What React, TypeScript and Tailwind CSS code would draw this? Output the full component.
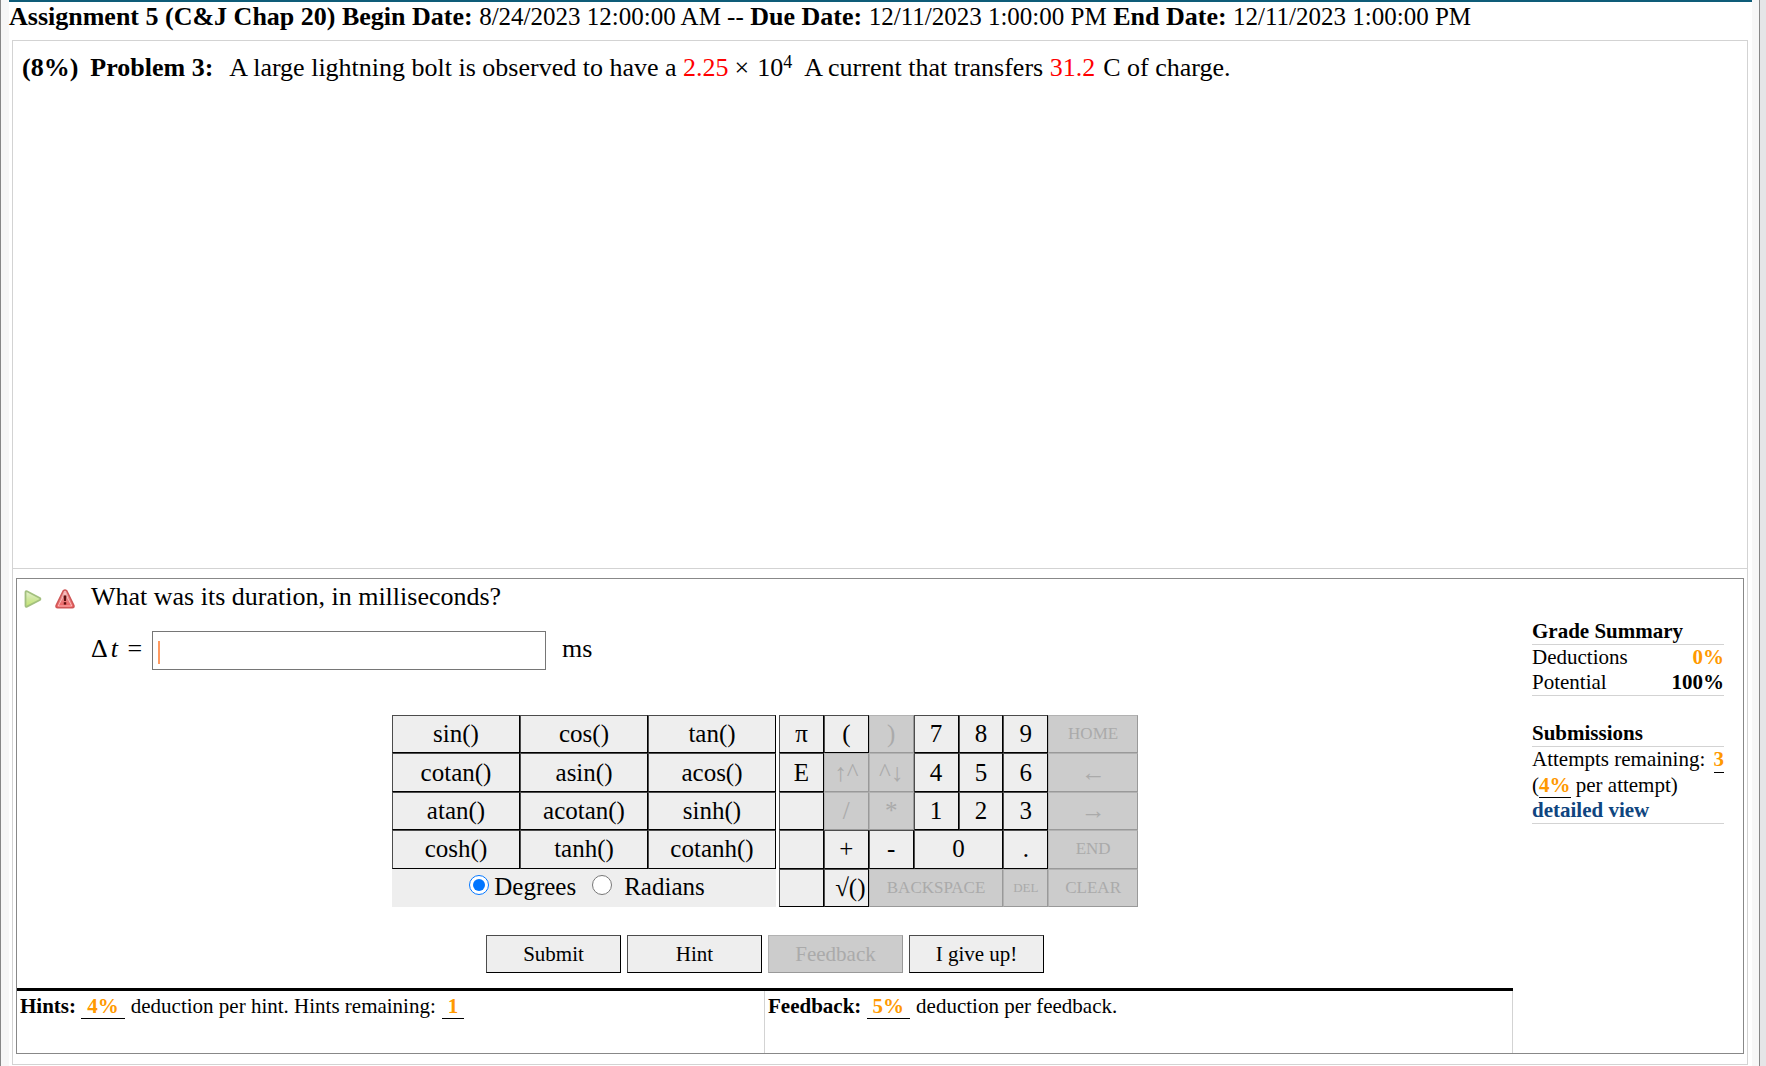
import { ReactNode, useState } from "react";
import clsx from "clsx";

type KeyData = {
  label: string;
  name?: string;
  span?: boolean;
  disabled?: boolean;
  size?: "md" | "sm";
};

const functionKeys: string[] = [
  "sin()",
  "cos()",
  "tan()",
  "cotan()",
  "asin()",
  "acos()",
  "atan()",
  "acotan()",
  "sinh()",
  "cosh()",
  "tanh()",
  "cotanh()",
];

const numberKeys: KeyData[] = [
  { label: "π" },
  { label: "(" },
  { label: ")", disabled: true },
  { label: "7" },
  { label: "8" },
  { label: "9" },
  { label: "HOME", span: true, disabled: true, size: "md" },
  { label: "E" },
  { label: "↑^", disabled: true },
  { label: "^↓", disabled: true },
  { label: "4" },
  { label: "5" },
  { label: "6" },
  { label: "←", span: true, disabled: true },
  { label: "", name: "Empty key 1" },
  { label: "/", disabled: true },
  { label: "*", disabled: true },
  { label: "1" },
  { label: "2" },
  { label: "3" },
  { label: "→", span: true, disabled: true },
  { label: "", name: "Empty key 2" },
  { label: "+" },
  { label: "-" },
  { label: "0", span: true },
  { label: "." },
  { label: "END", span: true, disabled: true, size: "md" },
  { label: "", name: "Empty key 3" },
  { label: "√()" },
  { label: "BACKSPACE", disabled: true, size: "md" },
  { label: "DEL", disabled: true, size: "sm" },
  { label: "CLEAR", span: true, disabled: true, size: "md" },
];

const buttonColors = (disabled?: boolean) =>
  disabled
    ? "border-t-[#b2b2b2] border-l-[#b2b2b2] border-r-[#999] border-b-[#999] bg-[#ccc] text-[#aaa]"
    : "border-t-[#4c4c4c] border-l-[#4c4c4c] border-r-black border-b-black bg-[#eee] text-black";

const Key = ({ label, name, span, disabled, size }: KeyData) => (
  <button
    type="button"
    disabled={disabled}
    aria-label={name}
    className={clsx(
      "flex min-w-0 items-center justify-center border leading-7",
      buttonColors(disabled),
      size === "md" ? "text-[17px]" : size === "sm" ? "text-[13px]" : "text-[25px]",
      label === "BACKSPACE" ? "col-span-3" : span && "col-span-2",
      label === "√()" && "pl-2"
    )}
  >
    {label}
  </button>
);

const ActionButton = ({
  children,
  disabled,
}: {
  children: ReactNode;
  disabled?: boolean;
}) => (
  <button
    type="button"
    disabled={disabled}
    className={clsx(
      "h-[38px] w-[135px] border text-[21px] leading-6",
      buttonColors(disabled)
    )}
  >
    {children}
  </button>
);

const Percent = ({ children, wide }: { children: ReactNode; wide?: boolean }) => (
  <b className={clsx("border-b border-black text-[#ff9900]", wide && "px-[6px]")}>
    {children}
  </b>
);

const PlayIcon = () => (
  <svg className="h-[18px] w-[18px]" viewBox="0 0 18 18">
    <defs>
      <linearGradient id="play" x1="0" y1="0" x2="0" y2="1">
        <stop offset="0" stopColor="#e6f2cf" />
        <stop offset="0.5" stopColor="#cfe79e" />
        <stop offset="1" stopColor="#c3e56f" />
      </linearGradient>
    </defs>
    <path
      d="M1.5 2.3Q1.5 .8 3 1.3L15.8 8Q17 9 15.8 10L3 16.6Q1.5 17.2 1.5 15.7Z"
      fill="url(#play)"
      stroke="#a3c07f"
      strokeWidth="1.8"
    />
  </svg>
);

const AlertIcon = () => (
  <svg className="h-5 w-5" viewBox="0 0 20 20">
    <defs>
      <linearGradient id="alert" x1="0" y1="0" x2="0" y2="1">
        <stop offset="0" stopColor="#f5c4c4" />
        <stop offset="0.5" stopColor="#e88585" />
        <stop offset="1" stopColor="#f25a5a" />
      </linearGradient>
    </defs>
    <path
      d="M8.3 1.8Q10 .1 11.7 1.8L18.8 16.2Q19.6 18.8 17.3 18.8H2.7Q.4 18.8 1.2 16.2Z"
      fill="url(#alert)"
      stroke="#cf5757"
      strokeWidth="1.5"
    />
    <path d="M10 3.8L16.8 17H3.2Z" fill="none" stroke="#f9caca" strokeWidth="0.8" />
    <path d="M8.6 6.5H11.4L11 12H9Z" fill="#5c1010" />
    <rect x="8.8" y="13.2" width="2.4" height="2.4" fill="#5c1010" />
  </svg>
);

const GradeSummary = () => (
  <aside className="w-[230px] shrink-0 px-[19px] pt-10 text-[21px] leading-[25px]">
    <h2 className="border-b border-[#d3d3d3] font-bold">Grade Summary</h2>
    <table className="w-full">
      <tbody>
        <tr>
          <th className="p-0 text-left font-normal">Deductions</th>
          <td className="p-0 text-right font-bold text-[#ff9900]">0%</td>
        </tr>
        <tr>
          <th className="p-0 text-left font-normal">Potential</th>
          <td className="p-0 text-right font-bold">100%</td>
        </tr>
      </tbody>
    </table>
    <h2 className="border-y border-[#d3d3d3] pt-[25px] font-bold">Submissions</h2>
    <div className="border-b border-[#d3d3d3] whitespace-nowrap">
      <p className="flex justify-between">
        Attempts remaining: <Percent>3</Percent>
      </p>
      <p>
        (<Percent>4%</Percent> per attempt)
      </p>
      <a href="#details" className="block font-bold text-[#0f4580]">
        detailed view
      </a>
    </div>
  </aside>
);

const App = () => {
  const [answer, setAnswer] = useState<string>("");
  const [unit, setUnit] = useState<string>("degrees");

  return (
    <div className="min-h-screen bg-[#e5e5e7] pr-[6px] font-['Liberation_Serif',serif] text-black">
      <div className="min-h-screen border-x border-[#888] bg-[#f7f7f7] pr-[7px] pl-2">
        <div className="min-h-screen border-t-2 border-[#0e5c78] bg-white pt-px pr-1">
          <header className="h-7 text-[26px] leading-7 font-bold">
            Assignment 5 (C&amp;J Chap 20) Begin Date:{" "}
            <span className="text-[25px] font-normal">
              8/24/2023 12:00:00 AM --
            </span>{" "}
            Due Date:{" "}
            <span className="text-[25px] font-normal">
              12/11/2023 1:00:00 PM
            </span>{" "}
            End Date:{" "}
            <span className="text-[25px] font-normal">
              12/11/2023 1:00:00 PM
            </span>
          </header>

          <main className="mt-[9px] ml-[3px] border border-[#d3d3d3]">
            <section className="min-h-[528px] border-b border-[#d3d3d3] px-[9px] pt-[13px] text-[26px] leading-7">
              <b>(8%)</b>
              <b className="ml-3">Problem 3:</b>
              <span className="ml-4">
                A large lightning bolt is observed to have a{" "}
                <span className="text-[#ff0000]">2.25</span>
                <span className="mr-2 ml-[6px]">×</span>
                10<sup className="-top-2 text-lg leading-none">4</sup>
                <span className="ml-3">A</span> current that transfers{" "}
                <span className="text-[#ff0000]">31.2</span>
                <span className="ml-2">C</span> of charge.
              </span>
            </section>

            <section className="mx-[3px] mt-[9px] mb-[10px] flex border border-[#888]">
              <div className="min-w-0 flex-1">
                <div className="flex pt-1 pl-[7px] text-[26px] leading-7">
                  <div className="flex w-[67px] items-center gap-[13px] pt-1">
                    <PlayIcon />
                    <AlertIcon />
                  </div>
                  <h1>What was its duration, in milliseconds?</h1>
                </div>
                <div className="mt-5 flex items-center pl-[74px] text-[26px] leading-7">
                  <label htmlFor="answer" className="w-[61px] pb-1">
                    Δ<i className="mx-[3px]">t</i> =
                  </label>
                  <div className="relative">
                    <input
                      id="answer"
                      type="text"
                      autoFocus
                      value={answer}
                      onChange={(event) => setAnswer(event.target.value)}
                      className="block h-[39px] w-[394px] border border-[#767676] px-[6px] caret-transparent outline-none"
                    />
                    {!answer && (
                      <span className="pointer-events-none absolute top-[10px] left-[6px] h-[23px] w-[2px] bg-[#ff9a60]" />
                    )}
                  </div>
                  <span className="ml-4 pb-1">ms</span>
                </div>

                <div className="mt-[45px] flex h-[192px] justify-center gap-[3px] text-[25px]">
                  <div className="grid w-[384px] grid-cols-3 grid-rows-5 bg-[#eee]">
                    {functionKeys.map((label) => (
                      <Key key={label} label={label} />
                    ))}
                    <div className="col-span-3 flex items-center justify-center pb-[2px] pl-[6px] leading-7">
                      <input
                        id="degrees"
                        type="radio"
                        name="unit"
                        checked={unit === "degrees"}
                        onChange={() => setUnit("degrees")}
                        className="mb-1 h-5 w-5"
                      />
                      <label htmlFor="degrees" className="ml-[5px]">
                        Degrees
                      </label>
                      <input
                        id="radians"
                        type="radio"
                        name="unit"
                        checked={unit === "radians"}
                        onChange={() => setUnit("radians")}
                        className="mb-1 ml-4 h-5 w-5"
                      />
                      <label htmlFor="radians" className="ml-3">
                        Radians
                      </label>
                    </div>
                  </div>
                  <div className="grid w-[359px] grid-cols-8 grid-rows-5">
                    {numberKeys.map((item) => (
                      <Key key={item.name || item.label} {...item} />
                    ))}
                  </div>
                </div>

                <div className="mt-7 flex justify-center gap-[6px]">
                  <ActionButton>Submit</ActionButton>
                  <ActionButton>Hint</ActionButton>
                  <ActionButton disabled>Feedback</ActionButton>
                  <ActionButton>I give up!</ActionButton>
                </div>

                <div className="mt-[15px] grid h-[65px] grid-cols-2 border-t-[3px] border-black text-[21px] leading-6">
                  <p className="border-r border-[#d3d3d3] pt-[3px] pl-[3px]">
                    <b>Hints: </b>
                    <Percent wide>4%</Percent>
                    <span className="mx-[6px]">
                      deduction per hint. Hints remaining:
                    </span>
                    <Percent wide>1</Percent>
                  </p>
                  <p className="border-r border-[#d3d3d3] pt-[3px] pl-[3px]">
                    <b>Feedback: </b>
                    <Percent wide>5%</Percent>
                    <span className="mx-[6px]">deduction per feedback.</span>
                  </p>
                </div>
              </div>
              <GradeSummary />
            </section>
          </main>
        </div>
      </div>
    </div>
  );
};

export default App;
